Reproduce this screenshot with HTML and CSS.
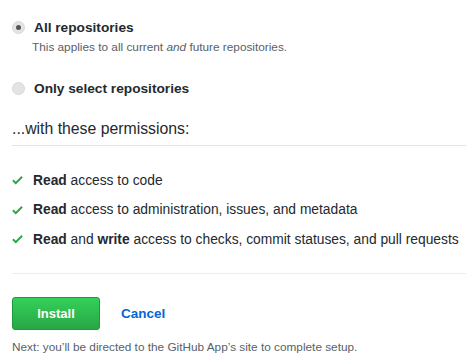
FILE: index.html
```html
<!DOCTYPE html>
<html>
<head>
<meta charset="utf-8">
<link rel="stylesheet" href="styles.css">
</head>
<body>
<div class="page">
  <div class="option">
    <span class="radio checked"></span>
    <div class="option-body">
      <div class="option-title">All repositories</div>
      <div class="option-note">This applies to all current <em>and</em> future repositories.</div>
    </div>
  </div>
  <div class="option second">
    <span class="radio"></span>
    <div class="option-body">
      <div class="option-title">Only select repositories</div>
    </div>
  </div>
  <h3 class="perm-head">...with these permissions:</h3>
  <ul class="perms">
    <li><svg class="check" viewBox="0 0 12 16" width="11" height="14"><path fill="#28a745" d="M12 5l-8 8-4-4 1.5-1.5L4 10l6.5-6.5L12 5z"/></svg><span><b>Read</b> access to code</span></li>
    <li><svg class="check" viewBox="0 0 12 16" width="11" height="14"><path fill="#28a745" d="M12 5l-8 8-4-4 1.5-1.5L4 10l6.5-6.5L12 5z"/></svg><span><b>Read</b> access to administration, issues, and metadata</span></li>
    <li><svg class="check" viewBox="0 0 12 16" width="11" height="14"><path fill="#28a745" d="M12 5l-8 8-4-4 1.5-1.5L4 10l6.5-6.5L12 5z"/></svg><span><b>Read</b> and <b>write</b> access to checks, commit statuses, and pull requests</span></li>
  </ul>
  <div class="actions">
    <button class="btn-install">Install</button>
    <a class="cancel" href="#">Cancel</a>
  </div>
  <p class="next">Next: you’ll be directed to the GitHub App’s site to complete setup.</p>
</div>
</body>
</html>
```

FILE: styles.css
```css
* { box-sizing: border-box; }
html, body { margin: 0; padding: 0; background: #fff; }
body { font-family: "Liberation Sans", Arial, sans-serif; color: #24292e; }
.page { padding: 18px 8px 0 12px; }
.option { display: flex; align-items: flex-start; gap: 9px; }
.option.second { margin-top: 25px; }
.radio {
  width: 13px; height: 13px; border-radius: 50%;
  background: #e4e4e4; border: 1px solid #d8d8d8;
  margin-top: 3px; flex: none; position: relative;
}
.radio.checked::after {
  content: ""; position: absolute; left: 3px; top: 3px;
  width: 5px; height: 5px; border-radius: 50%; background: #555;
}
.option-title { font-weight: bold; font-size: 13.7px; line-height: 20px; }
.option-note { font-size: 11.8px; color: #586069; margin-top: 2px; margin-left: -2px; }
.perm-head {
  font-weight: normal; font-size: 15.8px; margin: 21px 0 0;
  padding-bottom: 7px; border-bottom: 1px solid #e1e4e8;
}
.perms { list-style: none; margin: 0; padding: 25px 0 25px; border-bottom: 1px solid #eaecef; }
.perms li { display: flex; align-items: center; gap: 10px; font-size: 13.8px; height: 18px; margin-bottom: 11.5px; }
.perms li:last-child { margin-bottom: 0; }
.check { flex: none; }
.actions { display: flex; align-items: center; gap: 21px; margin-top: 23px; }
.btn-install {
  width: 88px; height: 33px; border-radius: 3px;
  border: 1px solid #1e9a3a;
  background: linear-gradient(#34d058, #28a745);
  color: #fff; font-weight: bold; font-size: 13px;
  font-family: "Liberation Sans", Arial, sans-serif;
}
.cancel { color: #0366d6; font-weight: bold; font-size: 13.5px; text-decoration: none; }
.next { font-size: 11.8px; color: #586069; margin: 10px 0 0; }
```
